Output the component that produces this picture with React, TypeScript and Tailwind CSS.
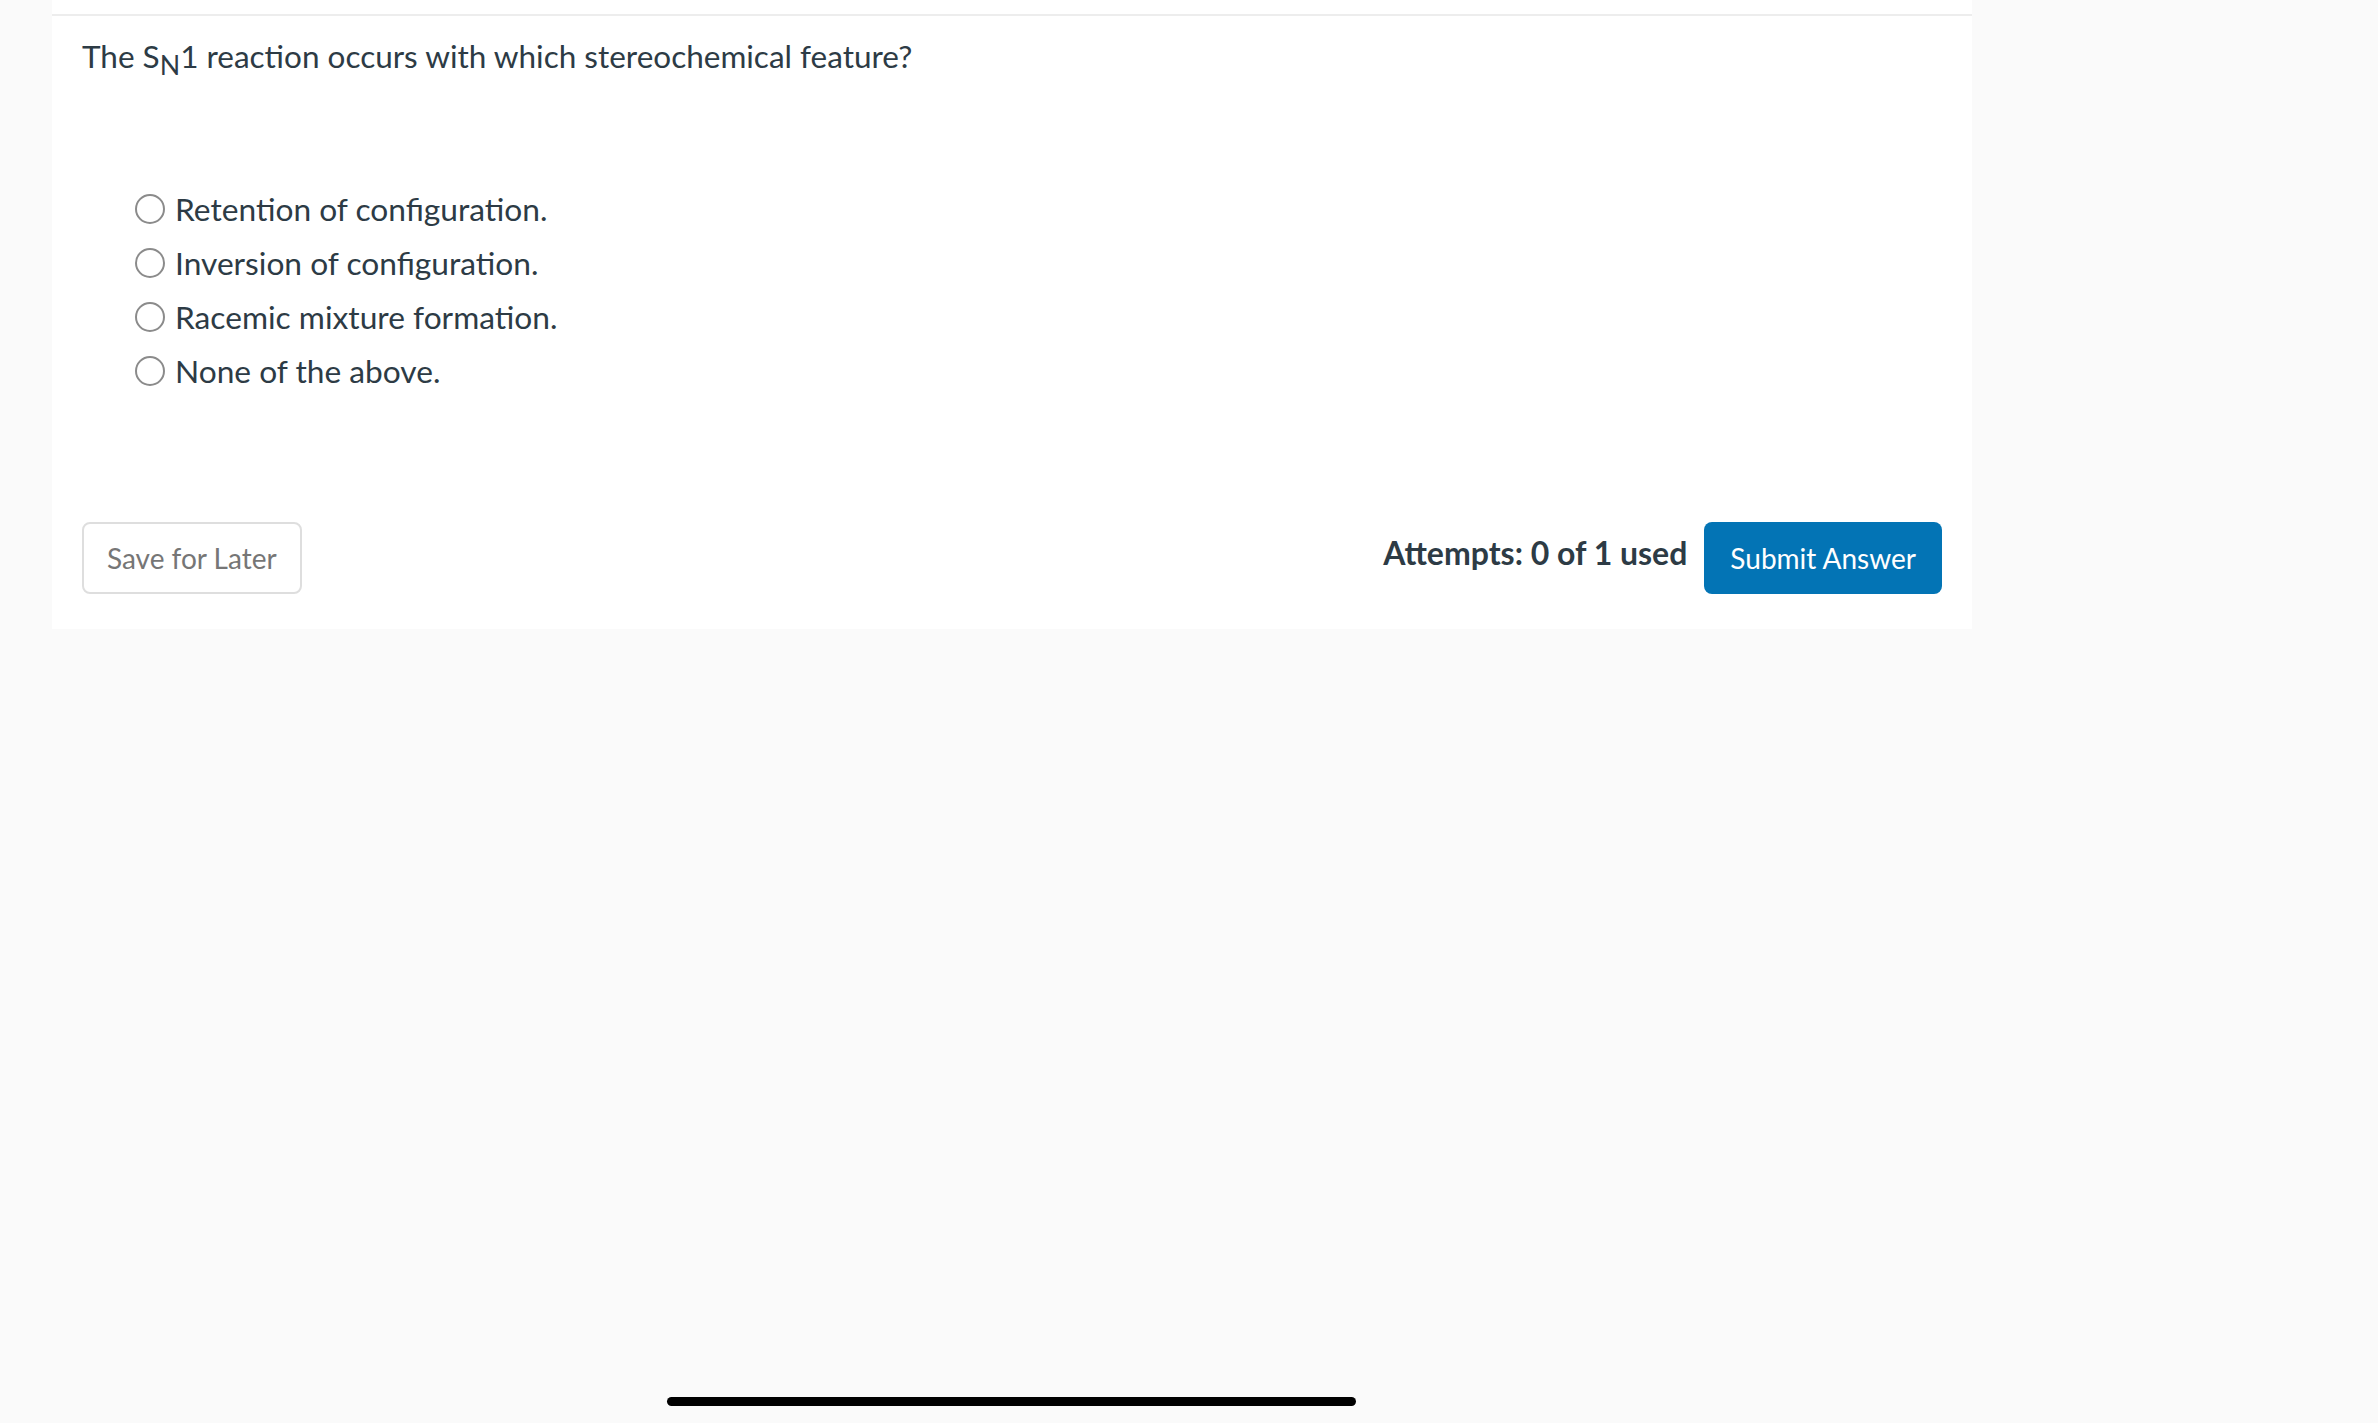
import React, { useState } from 'react';

const OPTIONS = [
  'Retention of configuration.',
  'Inversion of configuration.',
  'Racemic mixture formation.',
  'None of the above.',
];

export default function App() {
  const [picked, setPicked] = useState<number | null>(null);

  return (
    <div className="relative min-h-screen bg-[#fafafa] font-['Lato','Liberation_Sans',sans-serif] text-[#2d3b45]">
      {/* Question card */}
      <div className="ml-[52px] w-[1920px] bg-white pt-[14px]">
        <div className="border-t-2 border-[#ededed] px-[30px] pt-[18px] pb-[35px]">
          <p className="text-[31.5px] leading-[45px]">
            The S<sub className="text-[85%]">N</sub>1 reaction occurs with which stereochemical feature?
          </p>

          {/* Answers */}
          <div className="mt-[103px] ml-[53px] flex flex-col">
            {OPTIONS.map((label, i) => (
              <label
                key={label}
                className="flex h-[54px] cursor-pointer items-center gap-[10px] text-[31.7px]"
                onClick={() => setPicked(i)}
              >
                <span className="flex h-[30px] w-[30px] shrink-0 items-center justify-center rounded-full border-[2.5px] border-[#8b8b8b]">
                  {picked === i && <span className="h-[15px] w-[15px] rounded-full bg-[#2d3b45]" />}
                </span>
                <span className="leading-[54px]">{label}</span>
              </label>
            ))}
          </div>

          {/* Footer */}
          <div className="mt-[124px] flex items-center justify-between">
            <button className="h-[72px] rounded-[8px] border-2 border-[#dedede] bg-white px-[23px] text-[28px] text-[#767676]">
              Save for Later
            </button>
            <div className="flex items-center">
              <span className="mb-[10px] mr-[17px] text-[32px] font-bold">Attempts: 0 of 1 used</span>
              <button className="h-[72px] rounded-[8px] bg-[#0374b5] px-[26px] text-[28px] text-white">
                Submit Answer
              </button>
            </div>
          </div>
        </div>
      </div>

      {/* home indicator */}
      <div className="absolute bottom-[17px] left-[667px] h-[9px] w-[689px] rounded-full bg-black" />
    </div>
  );
}
